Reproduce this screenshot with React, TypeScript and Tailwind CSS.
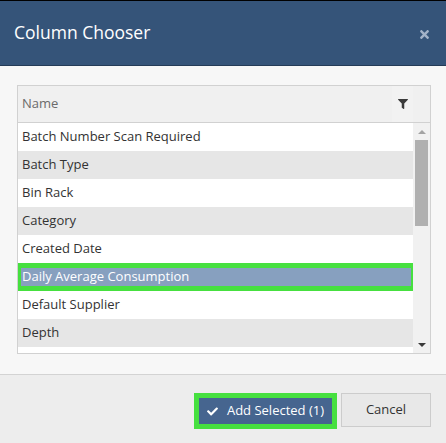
import { FaCheck, FaFilter, FaTimes } from 'react-icons/fa';

const rows = [
  'Batch Number Scan Required',
  'Batch Type',
  'Bin Rack',
  'Category',
  'Created Date',
  'Daily Average Consumption',
  'Default Supplier',
  'Depth',
  '',
];

export default function App() {
  return (
    <div className="w-[446px] h-[443px] flex flex-col bg-[#f7f7f7] font-['Open_Sans',sans-serif] overflow-hidden">
      {/* header */}
      <div className="h-[66px] shrink-0 flex items-center justify-between pl-[14px] pr-[15px] bg-[#355479] border-t border-t-black border-b border-b-[#243b57]">
        <span className="text-white text-[17.5px] leading-none">Column Chooser</span>
        <FaTimes className="text-[#a3b3c8] w-[13px] h-[13px] mt-[2px]" />
      </div>

      {/* body */}
      <div className="h-[308px] shrink-0 pt-[19px] pl-[17px] pr-[15px]">
        <div className="h-[269px] flex flex-col border border-[#d1d1d1] bg-white">
          <div className="h-[37px] shrink-0 flex bg-[#f0f0f0] border-b border-[#d1d1d1]">
            <div className="flex-1 flex items-center pl-[4px] text-[13px] text-[#6b6b6b]">Name</div>
            <div className="w-[21px] flex items-center justify-center bg-[#f2f2f2]">
              <FaFilter className="w-[10px] h-[10px] text-[#3a3a3a]" />
            </div>
            <div className="w-[17px]" />
          </div>
          <div className="flex-1 flex min-h-0">
            <div className="flex-1 overflow-hidden">
              {rows.map((r, i) => {
                const selected = r === 'Daily Average Consumption';
                return (
                  <div
                    key={i}
                    className={
                      selected
                        ? 'relative h-[28px] flex items-center pl-[4px] text-[13px] text-white bg-[#87a0bf]'
                        : i % 2 === 1
                        ? 'h-[28px] flex items-center pl-[4px] text-[13px] text-[#333] bg-[#e6e6e6]'
                        : 'h-[28px] flex items-center pl-[4px] text-[13px] text-[#333] bg-white'
                    }
                  >
                    {r}
                    {selected && (
                      <div className="absolute top-0 bottom-0 -left-[2px] -right-[3px] border-[5px] border-[#46e03f]" />
                    )}
                  </div>
                );
              })}
            </div>
            <div className="w-[17px] shrink-0 flex flex-col items-center bg-[#f1f1f1]">
              <div className="h-[17px] flex items-center justify-center">
                <div className="w-0 h-0 border-l-[4px] border-r-[4px] border-b-[4px] border-l-transparent border-r-transparent border-b-[#a3a3a3]" />
              </div>
              <div className="w-[13px] h-[86px] bg-[#b0b0b0]" />
              <div className="flex-1" />
              <div className="h-[17px] flex items-center justify-center">
                <div className="w-0 h-0 border-l-[4px] border-r-[4px] border-t-[4px] border-l-transparent border-r-transparent border-t-[#3a3a3a]" />
              </div>
            </div>
          </div>
        </div>
      </div>

      {/* footer */}
      <div className="flex-1 flex items-start justify-end gap-[4px] pt-[18px] pr-[15px] bg-[#ededed] border-t border-[#d3d3d3]">
        <button className="w-[143px] h-[36px] flex items-center justify-center gap-[9px] bg-[#46658f] border-[5px] border-[#46e03f] text-white text-[13px]">
          <FaCheck className="w-[11px] h-[11px]" />
          Add Selected (1)
        </button>
        <button className="w-[90px] h-[34px] flex items-center justify-center bg-[#e8e8e8] border border-[#cccccc] text-[#333] text-[13px]">
          Cancel
        </button>
      </div>
    </div>
  );
}
